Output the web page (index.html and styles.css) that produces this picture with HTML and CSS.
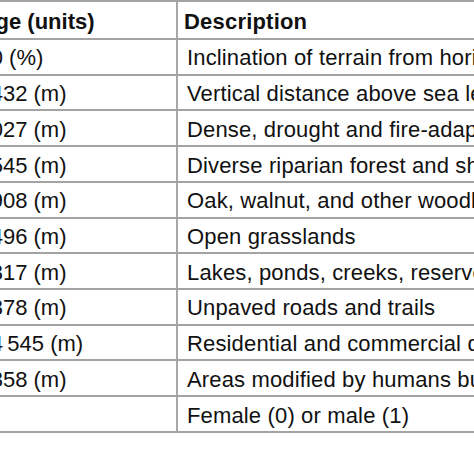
FILE: index.html
```html
<!DOCTYPE html>
<html>
<head>
<meta charset="utf-8">
<link rel="stylesheet" href="styles.css">
</head>
<body>
<div class="crop">
  <div class="table">
    <div class="row head">
      <div class="cell c1">Range (units)</div>
      <div class="cell c2">Description</div>
    </div>
    <div class="row"><div class="cell c1">0–90 (%)</div><div class="cell c2">Inclination of terrain from horizontal</div></div>
    <div class="row"><div class="cell c1">0–1432 (m)</div><div class="cell c2">Vertical distance above sea level</div></div>
    <div class="row"><div class="cell c1">0–1027 (m)</div><div class="cell c2">Dense, drought and fire-adapted shrubland</div></div>
    <div class="row"><div class="cell c1">0–5545 (m)</div><div class="cell c2">Diverse riparian forest and shrubland</div></div>
    <div class="row"><div class="cell c1">0–4908 (m)</div><div class="cell c2">Oak, walnut, and other woodlands</div></div>
    <div class="row"><div class="cell c1">0–3496 (m)</div><div class="cell c2">Open grasslands</div></div>
    <div class="row"><div class="cell c1">0–5317 (m)</div><div class="cell c2">Lakes, ponds, creeks, reservoirs</div></div>
    <div class="row"><div class="cell c1">0–1378 (m)</div><div class="cell c2">Unpaved roads and trails</div></div>
    <div class="row"><div class="cell c1">0–14&#8201;545 (m)</div><div class="cell c2">Residential and commercial development</div></div>
    <div class="row"><div class="cell c1">0–3358 (m)</div><div class="cell c2">Areas modified by humans but not developed</div></div>
    <div class="row"><div class="cell c1"></div><div class="cell c2">Female (0) or male (1)</div></div>
  </div>
</div>
</body>
</html>
```
FILE: styles.css
```css
html, body {
  margin: 0;
  padding: 0;
  background: #ffffff;
}
.crop {
  width: 474px;
  height: 474px;
  overflow: hidden;
}
.table {
  width: 760px;
  margin-left: -54px;
  border-top: 2px solid #a3a3a3;
  font-family: "Liberation Sans", Arial, sans-serif;
  font-size: 22px;
  color: #111111;
}
.row {
  display: flex;
  height: 35.73px;
  box-sizing: border-box;
  border-bottom: 2px solid #a3a3a3;
}
.row.head {
  height: 38px;
  font-weight: bold;
}
.cell {
  display: flex;
  align-items: center;
  box-sizing: border-box;
  padding-top: 3px;
  white-space: nowrap;
}
.c1 {
  width: 232px;
  padding-left: 8px;
  border-right: 2px solid #a8a8a8;
}
.c2 {
  flex: 1;
  padding-left: 9px;
  letter-spacing: 0.15px;
}
.head .c2 {
  padding-left: 6px;
  letter-spacing: 0.2px;
}
```
